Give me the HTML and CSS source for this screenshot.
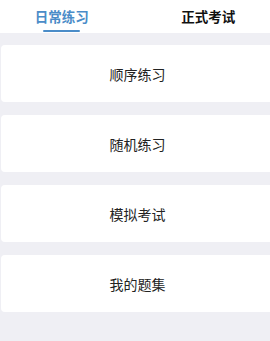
FILE: index.html
```html
<!DOCTYPE html>
<html lang="zh">
<head>
<meta charset="utf-8">
<link rel="stylesheet" href="styles.css">
</head>
<body>
<div class="tabs">
  <div class="tab active"><span class="label">日常练习</span><span class="bar"></span></div>
  <div class="tab"><span class="label">正式考试</span></div>
</div>
<div class="list">
  <div class="card">顺序练习</div>
  <div class="card">随机练习</div>
  <div class="card">模拟考试</div>
  <div class="card">我的题集</div>
</div>
</body>
</html>
```
FILE: styles.css
```css
html, body {
  margin: 0;
  padding: 0;
}
body {
  width: 270px;
  height: 341px;
  overflow: hidden;
  background: #efeff4;
  font-family: "Noto Sans CJK SC", "Noto Sans", sans-serif;
}
.tabs {
  display: flex;
  height: 33px;
  background: #fff;
}
.tab {
  flex: 1;
  display: flex;
  flex-direction: column;
  align-items: center;
  padding-top: 6px;
  box-sizing: border-box;
  font-size: 13.5px;
  font-weight: bold;
  color: #111;
  line-height: 20px;
}
.tab:first-child { padding-right: 8px; }
.tab:last-child { padding-left: 15px; }
.tab.active { color: #4a8cc8; }
.bar {
  margin-top: 4px;
  width: 37px;
  height: 2px;
  border-radius: 1px;
  background: #4a8cc8;
}
.list {
  display: flex;
  flex-direction: column;
  gap: 13px;
  padding: 12px 0 0 1px;
}
.card {
  height: 57px;
  margin-right: -4px;
  background: #fff;
  border-radius: 4px;
  display: flex;
  align-items: center;
  justify-content: center;
  font-size: 14px;
  color: #222;
}
```
